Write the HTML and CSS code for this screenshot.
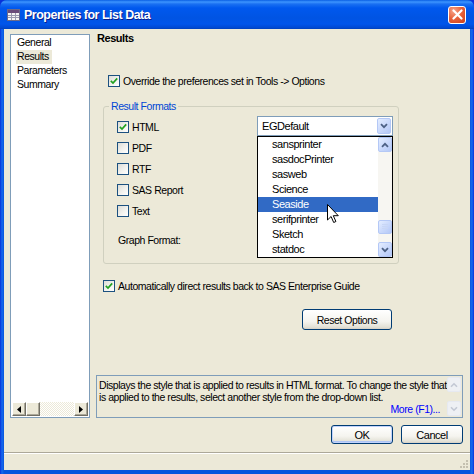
FILE: index.html
```html
<!DOCTYPE html>
<html lang="en">
<head>
<meta charset="utf-8">
<title>Properties for List Data</title>
<link rel="stylesheet" href="styles.css">
</head>
<body>
<div class="window">
  <div class="titlebar">
    <svg class="app-icon" width="13" height="12" viewBox="0 0 13 12">
      <rect x="0.5" y="0.5" width="12" height="11" fill="#f4f4f4" stroke="#6b6b8a"/>
      <rect x="1" y="1" width="11" height="3" fill="#6a4c7a"/>
      <path d="M1 6.5h11M1 8.5h11M4.5 4v7M8.5 4v7" stroke="#9a9ab0" stroke-width="1"/>
    </svg>
    <span class="title">Properties for List Data</span>
    <span class="close-btn">
      <svg width="11" height="11" viewBox="0 0 11 11"><path d="M1.5 1.5l8 8M9.5 1.5l-8 8" stroke="#fff" stroke-width="2.2" stroke-linecap="round"/></svg>
    </span>
  </div>

  <div class="client">
    <div class="main">
      <div class="nav">
        <ul class="nav-list">
          <li>General</li>
          <li class="current">Results</li>
          <li>Parameters</li>
          <li>Summary</li>
        </ul>
        <div class="hscroll">
          <span class="cbtn"><svg width="4" height="7" viewBox="0 0 4 7"><path d="M4 0v7L0 3.5z" fill="#000"/></svg></span>
          <span class="cbtn thumb"></span>
          <span class="htrack"></span>
          <span class="cbtn"><svg width="4" height="7" viewBox="0 0 4 7"><path d="M0 0v7l4-3.5z" fill="#000"/></svg></span>
        </div>
      </div>

      <div class="content">
        <div class="heading">Results</div>

        <label class="check-row override">
          <span class="cb checked"><svg width="8" height="8" viewBox="0 0 8 8"><path d="M0.8 3.8l2.2 2.2 4.2-4.6" fill="none" stroke="#21a121" stroke-width="1.7"/></svg></span>
          Override the preferences set in Tools -&gt; Options
        </label>

        <fieldset class="group">
          <legend>Result Formats</legend>
          <div class="group-body">
            <div class="formats">
              <label class="check-row fmt"><span class="cb checked"><svg width="8" height="8" viewBox="0 0 8 8"><path d="M0.8 3.8l2.2 2.2 4.2-4.6" fill="none" stroke="#21a121" stroke-width="1.7"/></svg></span>HTML</label>
              <label class="check-row fmt"><span class="cb"></span>PDF</label>
              <label class="check-row fmt"><span class="cb"></span>RTF</label>
              <label class="check-row fmt"><span class="cb"></span>SAS Report</label>
              <label class="check-row fmt"><span class="cb"></span>Text</label>
              <div class="graph-label">Graph Format:</div>
            </div>
            <div class="combo-wrap">
              <div class="combo">
                <span class="combo-value">EGDefault</span>
                <span class="xp-btn combo-btn"><svg width="8" height="6" viewBox="0 0 8 6"><path d="M1 1.2l3 3 3-3" fill="none" stroke="#4d6185" stroke-width="1.8"/></svg></span>
              </div>
              <div class="dropdown">
                <ul class="options">
                  <li>sansprinter</li>
                  <li>sasdocPrinter</li>
                  <li>sasweb</li>
                  <li>Science</li>
                  <li class="selected">Seaside</li>
                  <li>serifprinter</li>
                  <li>Sketch</li>
                  <li>statdoc</li>
                </ul>
                <div class="vscroll">
                  <span class="xp-btn sb-btn"><svg width="8" height="6" viewBox="0 0 8 6"><path d="M1 4.8l3-3 3 3" fill="none" stroke="#4d6185" stroke-width="1.8"/></svg></span>
                  <span class="vtrack"><span class="xp-btn vthumb"><svg width="6" height="6" viewBox="0 0 6 6"><path d="M0 0.5h6M0 2.5h6M0 4.5h6" stroke="#c8d6f5" stroke-width="1"/></svg></span></span>
                  <span class="xp-btn sb-btn"><svg width="8" height="6" viewBox="0 0 8 6"><path d="M1 1.2l3 3 3-3" fill="none" stroke="#4d6185" stroke-width="1.8"/></svg></span>
                </div>
              </div>
              <svg class="cursor" width="12" height="19" viewBox="0 0 12 19">
                <path d="M0.5 0.5v15.5l3.6-3.5 2.6 6 2.2-1-2.6-5.8h5z" fill="#fff" stroke="#000" stroke-width="1" stroke-linejoin="round"/>
              </svg>
            </div>
          </div>
        </fieldset>

        <label class="check-row auto">
          <span class="cb checked"><svg width="8" height="8" viewBox="0 0 8 8"><path d="M0.8 3.8l2.2 2.2 4.2-4.6" fill="none" stroke="#21a121" stroke-width="1.7"/></svg></span>
          Automatically direct results back to SAS Enterprise Guide
        </label>

        <button class="push reset">Reset Options</button>

        <div class="help">
          <p class="help-text">Displays the style that is applied to results in HTML format. To change the style that is applied to the results, select another style from the drop-down list.</p>
          <div class="help-more">More (F1)...</div>
          <div class="help-scroll">
            <span class="xp-btn sb-btn disabled"><svg width="8" height="6" viewBox="0 0 8 6"><path d="M1 4.8l3-3 3 3" fill="none" stroke="#c3c8d4" stroke-width="1.6"/></svg></span>
            <span class="xp-btn sb-btn disabled"><svg width="8" height="6" viewBox="0 0 8 6"><path d="M1 1.2l3 3 3-3" fill="none" stroke="#c3c8d4" stroke-width="1.6"/></svg></span>
          </div>
        </div>
      </div>
    </div>

    <div class="actions">
      <button class="push default">OK</button>
      <button class="push">Cancel</button>
    </div>

    <div class="statusbar">
      <svg class="grip" width="10" height="10" viewBox="0 0 10 10">
        <g fill="#c4c0b0"><rect x="8" y="2" width="2" height="2"/><rect x="5" y="5" width="2" height="2"/><rect x="8" y="5" width="2" height="2"/><rect x="2" y="8" width="2" height="2"/><rect x="5" y="8" width="2" height="2"/><rect x="8" y="8" width="2" height="2"/></g>
      </svg>
    </div>
  </div>
</div>
</body>
</html>
```

FILE: styles.css
```css
* { box-sizing: border-box; }

html, body {
  margin: 0;
  padding: 0;
  width: 474px;
  height: 474px;
  overflow: hidden;
  background: #0831d9;
}

body {
  font-family: "Liberation Sans", Arial, sans-serif;
  font-size: 10.5px;
  color: #000;
  letter-spacing: -0.45px;
}

.window {
  width: 474px;
  height: 474px;
  display: flex;
  flex-direction: column;
  background: linear-gradient(to right, #0831d9 0, #166aee 2px, #0855dd 4px, #0855dd 470px, #166aee 472px, #0831d9 474px);
  border-radius: 7px 7px 0 0;
}

/* ---- title bar ---- */
.titlebar {
  height: 29px;
  flex: none;
  display: flex;
  align-items: center;
  padding: 0 8px 0 7px;
  border-radius: 7px 7px 0 0;
  background: linear-gradient(to bottom, #0a5fe4 0, #3d95ff 2px, #1a70f2 4px, #0058ee 8px, #0054e3 18px, #0055eb 24px, #0048d0 28px, #003fb8 29px);
}

.app-icon { flex: none; margin-right: 4px; margin-top: 1px; }

.title {
  flex: 1;
  color: #fff;
  font-family: "Liberation Sans", Arial, sans-serif;
  font-weight: bold;
  font-size: 12.5px;
  letter-spacing: -0.5px;
  text-shadow: 1px 1px 0 #0a1e8c;
  margin-top: 1px;
}

.close-btn {
  width: 18px;
  height: 18px;
  border: 1px solid #fff;
  border-radius: 3px;
  background: radial-gradient(circle at 30% 25%, #f6a48a 0, #e8643e 45%, #cc3d16 100%);
  display: flex;
  align-items: center;
  justify-content: center;
}

/* ---- client ---- */
.client {
  flex: 1;
  margin: 0 4px 4px 4px;
  background: #ece9d8;
  display: flex;
  flex-direction: column;
}

.main {
  height: 389px;
  flex: none;
  display: flex;
  padding: 2px 7px 0 6px;
}

/* left navigation list */
.nav {
  width: 80px;
  margin-top: 3px;
  margin-right: 6px;
  border: 1px solid #7f9db9;
  background: #fff;
  display: flex;
  flex-direction: column;
  padding: 1px;
}

.nav-list {
  list-style: none;
  margin: 0;
  padding: 0 0 0 4px;
  flex: 1;
}

.nav-list li {
  height: 14px;
  line-height: 13px;
  padding-left: 1px;
  width: fit-content;
  padding-right: 3px;
}

.nav-list li.current { background: #ece9d8; }

.hscroll {
  height: 14px;
  display: flex;
  background: #f5f4ea;
}

.cbtn {
  width: 14px;
  height: 14px;
  flex: none;
  display: flex;
  align-items: center;
  justify-content: center;
  background: #ece9d8;
  border-top: 1px solid #fff;
  border-left: 1px solid #fff;
  border-right: 1px solid #716f64;
  border-bottom: 1px solid #716f64;
  box-shadow: inset -1px -1px 0 #aca899;
}

.htrack {
  flex: 1;
  background: repeating-conic-gradient(#fff 0 25%, #ece9d8 0 50%) 0 0 / 2px 2px;
}

/* right content */
.content {
  flex: 1;
  display: flex;
  flex-direction: column;
}

.heading {
  font-weight: bold;
  font-size: 11px;
  height: 14px;
  line-height: 14px;
  padding-left: 1px;
}

.check-row {
  display: flex;
  align-items: center;
  height: 14px;
  white-space: nowrap;
}

.cb {
  width: 12px;
  height: 12px;
  flex: none;
  border: 1px solid #1c5180;
  background: linear-gradient(135deg, #dcdcd7 0, #f2f2ee 55%, #fff 100%);
  margin-right: 3px;
  display: flex;
  align-items: center;
  justify-content: center;
}

.override { margin: 29px 0 0 12px; }

/* group box */
.group {
  margin: 12px 0 0 7px;
  width: 296px;
  height: 164px;
  border: 1px solid #d0d0bf;
  border-radius: 3px;
  padding: 3px 0 0 13px;
  min-width: 0;
}

.group legend {
  color: #0046d5;
  padding: 0 2px;
  margin-left: -8px;
  line-height: 13px;
}

.group-body {
  display: flex;
}

.formats {
  width: 140px;
  flex: none;
}

.fmt { height: 21px; }

.graph-label {
  margin-top: 13px;
  padding-left: 1px;
}

.combo-wrap {
  position: relative;
  width: 136px;
}

.combo {
  height: 20px;
  border: 1px solid #7f9db9;
  background: #fff;
  display: flex;
  align-items: center;
  padding: 1px;
  font-size: 11px;
}

.combo-value { flex: 1; padding-left: 3px; }

.xp-btn {
  display: flex;
  align-items: center;
  justify-content: center;
  border: 1px solid #b4c8f6;
  border-radius: 2px;
  background: linear-gradient(135deg, #e4edff 0, #c6d6fb 60%, #b4c8f6 100%);
}

.combo-btn { width: 14px; height: 16px; }

/* opened style list, drawn over the group box */
.dropdown {
  position: absolute;
  left: 0;
  top: 20px;
  width: 136px;
  height: 122px;
  border: 1px solid #000;
  background: #fff;
  display: flex;
}

.options {
  list-style: none;
  margin: 0;
  padding: 0;
  flex: 1;
}

.options li {
  height: 15px;
  line-height: 15px;
  padding-left: 14px;
  font-size: 11px;
}

.options li.selected {
  background: #316ac5;
  color: #fff;
}

.vscroll {
  width: 14px;
  display: flex;
  flex-direction: column;
  background: #f7f6f2;
}

.sb-btn { width: 14px; height: 15px; flex: none; }

.vtrack {
  flex: 1;
  display: flex;
  flex-direction: column;
  justify-content: flex-end;
  padding-bottom: 8px;
}

.vthumb { height: 14px; }

.cursor {
  position: absolute;
  left: 70px;
  top: 88px;
}

.auto { margin: 15px 0 0 7px; }

/* push buttons */
.push {
  font: inherit;
  letter-spacing: inherit;
  color: #000;
  height: 21px;
  border: 1px solid #003c74;
  border-radius: 3px;
  background: linear-gradient(to bottom, #fff 0, #f5f4ef 60%, #e3e1d6 90%, #d6d0c5 100%);
  padding: 0;
}

.reset {
  width: 90px;
  margin: 16px 0 0 206px;
}

/* help panel */
.help {
  margin-top: auto;
  height: 43px;
  border: 1px solid #7f9db9;
  background: #ece9d8;
  position: relative;
  display: flex;
  flex-direction: column;
  padding: 3px 14px 0 2px;
}

.help-text {
  margin: 0;
  line-height: 12px;
}

.help-more {
  color: #0000ff;
  text-align: right;
  margin-top: 0;
  padding-right: 8px;
}

.help-scroll {
  position: absolute;
  right: 1px;
  top: 1px;
  bottom: 1px;
  width: 14px;
  display: flex;
  flex-direction: column;
  justify-content: space-between;
}

.sb-btn.disabled {
  border-color: #e6e9f1;
  background: #eef0f4;
}

/* dialog buttons */
.actions {
  display: flex;
  justify-content: flex-end;
  gap: 8px;
  padding: 7px 7px 0 0;
  height: 34px;
  flex: none;
}

.actions .push { width: 62px; height: 19px; font-size: 11px; }

.push.default {
  box-shadow: inset 0 0 0 1px #c2d3fc, inset 0 -1px 0 1px #adc4f4;
}

.statusbar {
  flex: 1;
  border-top: 1px solid #aca899;
  box-shadow: inset 0 1px 0 #fff;
  display: flex;
  justify-content: flex-end;
  align-items: flex-end;
  padding: 0 2px 2px 0;
}
```
